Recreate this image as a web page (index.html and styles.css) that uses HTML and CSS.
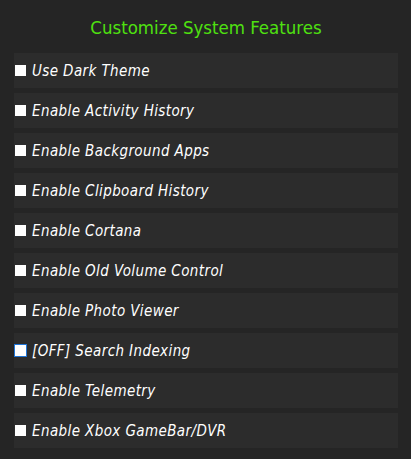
FILE: index.html
```html
<!DOCTYPE html>
<html>
<head>
<meta charset="utf-8">
<link rel="stylesheet" href="styles.css">
</head>
<body>
<div class="panel">
  <h1 class="title">Customize System Features</h1>
  <div class="list">
    <label class="row"><span class="box"></span><span class="label">Use Dark Theme</span></label>
    <label class="row"><span class="box"></span><span class="label">Enable Activity History</span></label>
    <label class="row"><span class="box"></span><span class="label">Enable Background Apps</span></label>
    <label class="row"><span class="box"></span><span class="label">Enable Clipboard History</span></label>
    <label class="row"><span class="box"></span><span class="label">Enable Cortana</span></label>
    <label class="row"><span class="box"></span><span class="label">Enable Old Volume Control</span></label>
    <label class="row"><span class="box"></span><span class="label">Enable Photo Viewer</span></label>
    <label class="row"><span class="box focus"></span><span class="label">[OFF] Search Indexing</span></label>
    <label class="row"><span class="box"></span><span class="label">Enable Telemetry</span></label>
    <label class="row"><span class="box"></span><span class="label">Enable Xbox GameBar/DVR</span></label>
  </div>
</div>
</body>
</html>
```
FILE: styles.css
```css
html, body {
  margin: 0;
  padding: 0;
  background: #252525;
}
.panel {
  width: 411px;
  height: 459px;
  box-sizing: border-box;
  padding: 15px 13px 0 14px;
  font-family: "DejaVu Sans Condensed", "DejaVu Sans", sans-serif;
}
.title {
  margin: 0 0 12px 0;
  height: 26px;
  line-height: 26px;
  text-align: center;
  font-size: 18.5px;
  font-weight: normal;
  color: #4fe010;
}
.list {
  display: flex;
  flex-direction: column;
  gap: 5px;
}
.row {
  display: flex;
  align-items: center;
  height: 35px;
  background: #2c2c2c;
  padding-left: 1px;
}
.box {
  width: 11px;
  height: 11px;
  background: #ffffff;
  box-sizing: border-box;
  margin-right: 6px;
}
.box.focus {
  width: 13px;
  height: 13px;
  border: 1.5px solid #1f74d6;
  margin-left: -1px;
  margin-right: 5px;
}
.label {
  color: #ffffff;
  font-style: italic;
  font-size: 15px;
  letter-spacing: 0.4px;
}
```
